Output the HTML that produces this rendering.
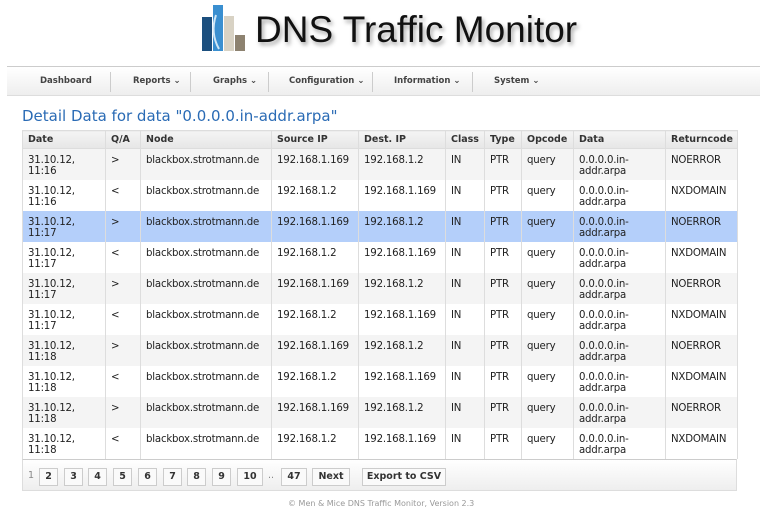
<!DOCTYPE html>
<html><head><meta charset="utf-8"><style>
*{margin:0;padding:0;box-sizing:border-box}
body{width:768px;height:530px;background:#fff;font-family:"DejaVu Sans","Liberation Sans",sans-serif;color:#222;position:relative;overflow:hidden}
.logo{position:absolute;left:202px;top:5px}
.title{position:absolute;left:255px;top:9px;font-family:"Liberation Sans",sans-serif;font-size:37px;color:#111;letter-spacing:0px;text-shadow:2px 3px 4px rgba(0,0,0,.35);white-space:nowrap}
.nav{position:absolute;left:7px;top:66px;width:753px;height:30px;border-top:1px solid #ccc;background:linear-gradient(#fff,#eee);border-bottom:1px solid #ddd}
.nav span{position:absolute;top:9px;font-size:8.5px;font-weight:bold;color:#444;white-space:nowrap}
.nav i{position:absolute;top:5px;width:1px;height:20px;background:#ccc}
h1{position:absolute;left:22px;top:107px;font-size:15px;font-weight:normal;color:#2a6bb5;white-space:nowrap}
table{position:absolute;left:22px;top:130px;width:715px;border-collapse:collapse;font-size:10.2px;table-layout:fixed}
th{background:linear-gradient(#f4f4f4,#e6e6e6);text-align:left;font-weight:bold;height:18px;padding:0 5px;border:1px solid #ddd;color:#333;font-size:9.5px}
td{vertical-align:top;padding:6px 5px 0;height:31px;border-left:1px solid #ddd;border-right:1px solid #ddd;line-height:11px;letter-spacing:-0.2px}
tr.o td{background:#f4f4f4}
tr.h td{background:#b4cffa}
.pag{position:absolute;left:22px;top:459px;width:715px;height:32px;border:1px solid #ddd;border-top:1px solid #ccc;background:linear-gradient(#fff,#eee)}
.pag b,.pag span{position:absolute;top:8px;height:18px;border:1px solid #ccc;background:#fafafa;font-size:9.5px;text-align:center;line-height:16px;color:#333}
.foot{position:absolute;left:288px;top:499px;font-size:8px;color:#999;white-space:nowrap}
</style></head><body>
<svg class="logo" width="48" height="46" viewBox="0 0 48 46">
<rect x="0" y="12" width="10" height="34" fill="#1c4f7e"/>
<rect x="11" y="0" width="10" height="46" fill="#3a8fd0"/>
<path d="M14 10 q-6 18 3 34" stroke="#cfe6f6" stroke-width="2" fill="none"/>
<rect x="22" y="11" width="10" height="35" fill="#d8d2c4"/>
<rect x="33" y="30" width="10" height="16" fill="#8d8270"/>
</svg>
<div class="title">DNS Traffic Monitor</div>
<div class="nav">
<span style="left:33px">Dashboard</span><i style="left:103px"></i>
<span style="left:126px">Reports ⌄</span><i style="left:183px"></i>
<span style="left:206px">Graphs ⌄</span><i style="left:261px"></i>
<span style="left:282px">Configuration ⌄</span><i style="left:365px"></i>
<span style="left:387px">Information ⌄</span><i style="left:465px"></i>
<span style="left:487px">System ⌄</span>
</div>
<h1>Detail Data for data "0.0.0.0.in-addr.arpa"</h1>
<table>
<colgroup><col style="width:83px"><col style="width:35px"><col style="width:131px"><col style="width:87px"><col style="width:87px"><col style="width:39px"><col style="width:37px"><col style="width:52px"><col style="width:92px"><col style="width:72px"></colgroup>
<tr><th>Date</th><th>Q/A</th><th>Node</th><th>Source IP</th><th>Dest. IP</th><th>Class</th><th>Type</th><th>Opcode</th><th>Data</th><th>Returncode</th></tr>
<tr class="o"><td>31.10.12,<br>11:16</td><td>&gt;</td><td>blackbox.strotmann.de</td><td>192.168.1.169</td><td>192.168.1.2</td><td>IN</td><td>PTR</td><td>query</td><td>0.0.0.0.in-<br>addr.arpa</td><td>NOERROR</td></tr>
<tr><td>31.10.12,<br>11:16</td><td>&lt;</td><td>blackbox.strotmann.de</td><td>192.168.1.2</td><td>192.168.1.169</td><td>IN</td><td>PTR</td><td>query</td><td>0.0.0.0.in-<br>addr.arpa</td><td>NXDOMAIN</td></tr>
<tr class="h"><td>31.10.12,<br>11:17</td><td>&gt;</td><td>blackbox.strotmann.de</td><td>192.168.1.169</td><td>192.168.1.2</td><td>IN</td><td>PTR</td><td>query</td><td>0.0.0.0.in-<br>addr.arpa</td><td>NOERROR</td></tr>
<tr><td>31.10.12,<br>11:17</td><td>&lt;</td><td>blackbox.strotmann.de</td><td>192.168.1.2</td><td>192.168.1.169</td><td>IN</td><td>PTR</td><td>query</td><td>0.0.0.0.in-<br>addr.arpa</td><td>NXDOMAIN</td></tr>
<tr class="o"><td>31.10.12,<br>11:17</td><td>&gt;</td><td>blackbox.strotmann.de</td><td>192.168.1.169</td><td>192.168.1.2</td><td>IN</td><td>PTR</td><td>query</td><td>0.0.0.0.in-<br>addr.arpa</td><td>NOERROR</td></tr>
<tr><td>31.10.12,<br>11:17</td><td>&lt;</td><td>blackbox.strotmann.de</td><td>192.168.1.2</td><td>192.168.1.169</td><td>IN</td><td>PTR</td><td>query</td><td>0.0.0.0.in-<br>addr.arpa</td><td>NXDOMAIN</td></tr>
<tr class="o"><td>31.10.12,<br>11:18</td><td>&gt;</td><td>blackbox.strotmann.de</td><td>192.168.1.169</td><td>192.168.1.2</td><td>IN</td><td>PTR</td><td>query</td><td>0.0.0.0.in-<br>addr.arpa</td><td>NOERROR</td></tr>
<tr><td>31.10.12,<br>11:18</td><td>&lt;</td><td>blackbox.strotmann.de</td><td>192.168.1.2</td><td>192.168.1.169</td><td>IN</td><td>PTR</td><td>query</td><td>0.0.0.0.in-<br>addr.arpa</td><td>NXDOMAIN</td></tr>
<tr class="o"><td>31.10.12,<br>11:18</td><td>&gt;</td><td>blackbox.strotmann.de</td><td>192.168.1.169</td><td>192.168.1.2</td><td>IN</td><td>PTR</td><td>query</td><td>0.0.0.0.in-<br>addr.arpa</td><td>NOERROR</td></tr>
<tr><td>31.10.12,<br>11:18</td><td>&lt;</td><td>blackbox.strotmann.de</td><td>192.168.1.2</td><td>192.168.1.169</td><td>IN</td><td>PTR</td><td>query</td><td>0.0.0.0.in-<br>addr.arpa</td><td>NXDOMAIN</td></tr>
</table>
<div class="pag">
<div style="position:absolute;left:5px;top:10px;font-size:9.5px;color:#888">1</div>
<b style="left:16px;width:19px">2</b><b style="left:41px;width:19px">3</b><b style="left:65px;width:19px">4</b><b style="left:90px;width:19px">5</b><b style="left:115px;width:19px">6</b><b style="left:140px;width:19px">7</b><b style="left:164px;width:19px">8</b><b style="left:189px;width:19px">9</b><b style="left:214px;width:26px">10</b>
<div style="position:absolute;left:245px;top:10px;font-size:9.5px;color:#888">..</div>
<b style="left:258px;width:26px">47</b><b style="left:289px;width:38px">Next</b><b style="left:339px;width:84px">Export to CSV</b>
</div>
<div class="foot">© Men &amp; Mice DNS Traffic Monitor, Version 2.3</div>
</body></html>
